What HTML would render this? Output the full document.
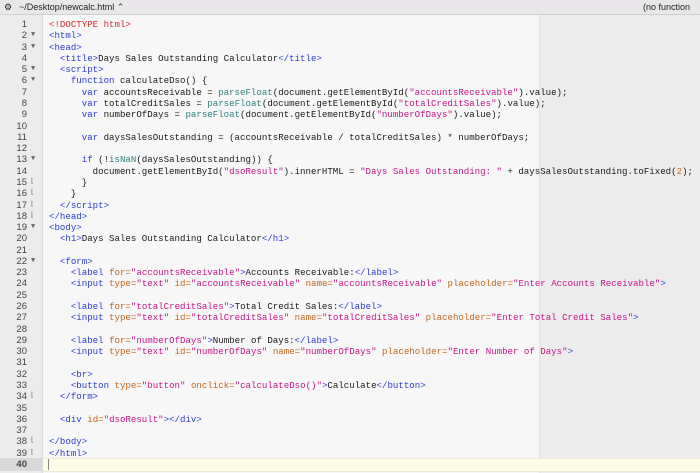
<!DOCTYPE html>
<html><head><style>
body{margin:0;width:700px;height:473px;overflow:hidden;background:#f7f7f7;font-family:"Liberation Sans",sans-serif;position:relative}
#bar{position:absolute;left:0;top:0;width:700px;height:14px;background:#e9e7ea;border-bottom:1px solid #cfcfcf;font-size:9px;color:#222;line-height:14px}
#gut{position:absolute;left:0;top:15px;width:42px;height:458px;background:#ececec;border-right:1px solid #dcdcdc}
#guide{position:absolute;left:539px;top:15px;width:161px;height:458px;background:#ececec;border-left:1px solid #e2e2e2}
#hl{position:absolute;left:43px;top:458px;width:657px;height:12px;background:#fbfbe6;border-top:1px solid #ecebd0;border-bottom:1px solid #ecebd0}
#hlg{position:absolute;left:0;top:458px;width:42px;height:13px;background:#d8d8d8}
pre{margin:0;font-family:"Liberation Mono",monospace;font-size:9.1px;line-height:11.28px;position:absolute;top:19px}
#nums{left:0;width:27px;text-align:right;color:#444;font-family:"Liberation Sans",sans-serif;font-size:9.5px}
#arr{left:31px;color:#666;font-size:7px}
#code{left:49px;color:#1a1a1a}
.t{color:#2c3bd2}.a{color:#c0661c}.s{color:#c4168a}.k{color:#2c3bd2}.f{color:#2f8080}.d{color:#d92a2a}.n{color:#d06a10}
#cur{position:absolute;left:48px;top:459px;width:1px;height:11px;background:#888}
</style></head><body>
<div id="bar"><span style="position:absolute;left:4px">⚙</span><span style="position:absolute;left:19px">~/Desktop/newcalc.html ⌃</span><span style="position:absolute;right:10px">(no function</span></div>
<div id="gut"></div><div id="guide"></div><div id="hlg"></div><div id="hl"></div><div id="cur"></div>
<pre id="nums">1
2
3
4
5
6
7
8
9
10
11
12
13
14
15
16
17
18
19
20
21
22
23
24
25
26
27
28
29
30
31
32
33
34
35
36
37
38
39
<b>40</b></pre>
<pre id="arr"> 
▼
▼
 
▼
▼
 
 
 
 
 
 
▼
 
⌊
⌊
⌊
⌊
▼
 
 
▼
 
 
 
 
 
 
 
 
 
 
 
⌊
 
 
 
⌊
⌊
 </pre>
<pre id="code"><span class="d">&lt;!DOCTYPE html&gt;</span>
<span class="t">&lt;html&gt;</span>
<span class="t">&lt;head&gt;</span>
  <span class="t">&lt;title&gt;</span>Days Sales Outstanding Calculator<span class="t">&lt;/title&gt;</span>
  <span class="t">&lt;script&gt;</span>
    <span class="k">function</span> calculateDso() {
      <span class="k">var</span> accountsReceivable = <span class="f">parseFloat</span>(document.getElementById(<span class="s">"accountsReceivable"</span>).value);
      <span class="k">var</span> totalCreditSales = <span class="f">parseFloat</span>(document.getElementById(<span class="s">"totalCreditSales"</span>).value);
      <span class="k">var</span> numberOfDays = <span class="f">parseFloat</span>(document.getElementById(<span class="s">"numberOfDays"</span>).value);

      <span class="k">var</span> daysSalesOutstanding = (accountsReceivable / totalCreditSales) * numberOfDays;

      <span class="k">if</span> (!<span class="f">isNaN</span>(daysSalesOutstanding)) {
        document.getElementById(<span class="s">"dsoResult"</span>).innerHTML = <span class="s">"Days Sales Outstanding: "</span> + daysSalesOutstanding.toFixed(<span class="n">2</span>);
      }
    }
  <span class="t">&lt;/script&gt;</span>
<span class="t">&lt;/head&gt;</span>
<span class="t">&lt;body&gt;</span>
  <span class="t">&lt;h1&gt;</span>Days Sales Outstanding Calculator<span class="t">&lt;/h1&gt;</span>

  <span class="t">&lt;form&gt;</span>
    <span class="t">&lt;label</span> <span class="a">for=</span><span class="s">"accountsReceivable"</span><span class="t">&gt;</span>Accounts Receivable:<span class="t">&lt;/label&gt;</span>
    <span class="t">&lt;input</span> <span class="a">type=</span><span class="s">"text"</span> <span class="a">id=</span><span class="s">"accountsReceivable"</span> <span class="a">name=</span><span class="s">"accountsReceivable"</span> <span class="a">placeholder=</span><span class="s">"Enter Accounts Receivable"</span><span class="t">&gt;</span>

    <span class="t">&lt;label</span> <span class="a">for=</span><span class="s">"totalCreditSales"</span><span class="t">&gt;</span>Total Credit Sales:<span class="t">&lt;/label&gt;</span>
    <span class="t">&lt;input</span> <span class="a">type=</span><span class="s">"text"</span> <span class="a">id=</span><span class="s">"totalCreditSales"</span> <span class="a">name=</span><span class="s">"totalCreditSales"</span> <span class="a">placeholder=</span><span class="s">"Enter Total Credit Sales"</span><span class="t">&gt;</span>

    <span class="t">&lt;label</span> <span class="a">for=</span><span class="s">"numberOfDays"</span><span class="t">&gt;</span>Number of Days:<span class="t">&lt;/label&gt;</span>
    <span class="t">&lt;input</span> <span class="a">type=</span><span class="s">"text"</span> <span class="a">id=</span><span class="s">"numberOfDays"</span> <span class="a">name=</span><span class="s">"numberOfDays"</span> <span class="a">placeholder=</span><span class="s">"Enter Number of Days"</span><span class="t">&gt;</span>

    <span class="t">&lt;br&gt;</span>
    <span class="t">&lt;button</span> <span class="a">type=</span><span class="s">"button"</span> <span class="a">onclick=</span><span class="s">"calculateDso()"</span><span class="t">&gt;</span>Calculate<span class="t">&lt;/button&gt;</span>
  <span class="t">&lt;/form&gt;</span>

  <span class="t">&lt;div</span> <span class="a">id=</span><span class="s">"dsoResult"</span><span class="t">&gt;&lt;/div&gt;</span>

<span class="t">&lt;/body&gt;</span>
<span class="t">&lt;/html&gt;</span>
</pre>
</body></html>
